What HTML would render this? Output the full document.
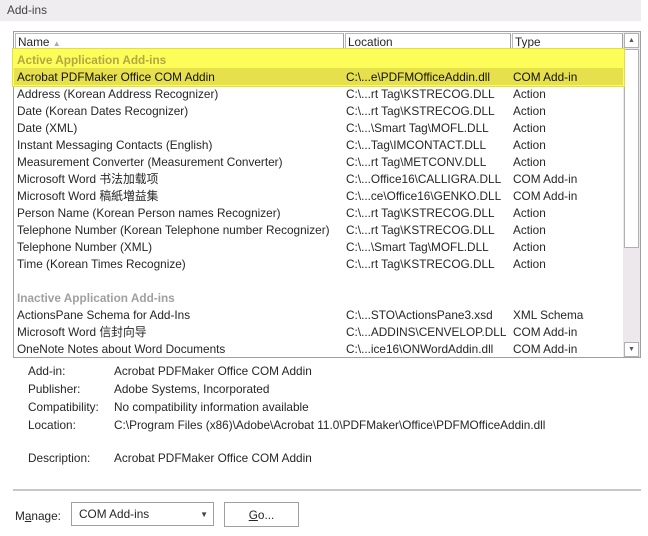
<!DOCTYPE html>
<html><head><style>
body{margin:0;width:648px;height:536px;background:#fff;font-family:"Liberation Sans","Noto Sans CJK SC",sans-serif;font-size:11.8px;color:#262626;position:relative;overflow:hidden}
.a{position:absolute;white-space:nowrap}
.band{left:0;top:0;width:641px;height:21px;background:#f0edf0}
.box{left:13px;top:31px;width:626px;height:325px;border:1px solid #a0a0a0;background:#fff}
.hd{top:33px;height:16px;border:1px solid #b8b8b8;border-right-color:#a0a0a0;background:#fff;line-height:16px;padding-left:2px;box-sizing:border-box}
.r{height:17px;line-height:19px}
.c1{left:17px}.c2{left:346px}.c3{left:513px}
</style></head><body>
<div class="a band"></div>
<div class="a" style="left:7px;top:2px;color:#444;line-height:16px">Add-ins</div>
<div class="a box"></div>
<div class="a hd" style="left:15px;width:329px">Name <span style="color:#aaa;font-size:8px">▲</span></div>
<div class="a hd" style="left:345px;width:166px">Location</div>
<div class="a hd" style="left:512px;width:111px">Type</div>
<div class="a" style="left:623px;top:32px;width:17px;height:325px;background:#ede8ec"></div>
<div class="a" style="left:624px;top:33px;height:15px;border:1px solid #b0b0b0;background:#fff;font-size:7px;text-align:center;line-height:13px;color:#555;box-sizing:border-box;width:15px">▲</div>
<div class="a" style="left:624px;top:49px;width:15px;height:199px;border:1px solid #b0b0b0;background:#fff;box-sizing:border-box"></div>
<div class="a" style="left:624px;top:342px;width:15px;height:15px;border:1px solid #b0b0b0;background:#fff;font-size:7px;text-align:center;line-height:13px;color:#555;box-sizing:border-box">▼</div>
<div class="a" style="left:12px;top:48px;width:613px;height:39px;background:#fdfd5a;border:1px solid #e0e040;box-sizing:border-box"></div>
<div class="a" style="left:14px;top:68px;width:609px;height:17px;background:#e6e04c"></div>
<div class="a r c1" style="top:51px;color:#b0a840;font-weight:bold">Active Application Add-ins</div>
<div class="a r c1" style="top:68px;color:#111">Acrobat PDFMaker Office COM Addin</div><div class="a r c2" style="top:68px;color:#111">C:\...e\PDFMOfficeAddin.dll</div><div class="a r c3" style="top:68px;color:#111">COM Add-in</div>
<div class="a r c1" style="top:85px">Address (Korean Address Recognizer)</div><div class="a r c2" style="top:85px">C:\...rt Tag\KSTRECOG.DLL</div><div class="a r c3" style="top:85px">Action</div>
<div class="a r c1" style="top:102px">Date (Korean Dates Recognizer)</div><div class="a r c2" style="top:102px">C:\...rt Tag\KSTRECOG.DLL</div><div class="a r c3" style="top:102px">Action</div>
<div class="a r c1" style="top:119px">Date (XML)</div><div class="a r c2" style="top:119px">C:\...\Smart Tag\MOFL.DLL</div><div class="a r c3" style="top:119px">Action</div>
<div class="a r c1" style="top:136px">Instant Messaging Contacts (English)</div><div class="a r c2" style="top:136px">C:\...Tag\IMCONTACT.DLL</div><div class="a r c3" style="top:136px">Action</div>
<div class="a r c1" style="top:153px">Measurement Converter (Measurement Converter)</div><div class="a r c2" style="top:153px">C:\...rt Tag\METCONV.DLL</div><div class="a r c3" style="top:153px">Action</div>
<div class="a r c1" style="top:170px">Microsoft Word 书法加载项</div><div class="a r c2" style="top:170px">C:\...Office16\CALLIGRA.DLL</div><div class="a r c3" style="top:170px">COM Add-in</div>
<div class="a r c1" style="top:187px">Microsoft Word 稿紙増益集</div><div class="a r c2" style="top:187px">C:\...ce\Office16\GENKO.DLL</div><div class="a r c3" style="top:187px">COM Add-in</div>
<div class="a r c1" style="top:204px">Person Name (Korean Person names Recognizer)</div><div class="a r c2" style="top:204px">C:\...rt Tag\KSTRECOG.DLL</div><div class="a r c3" style="top:204px">Action</div>
<div class="a r c1" style="top:221px">Telephone Number (Korean Telephone number Recognizer)</div><div class="a r c2" style="top:221px">C:\...rt Tag\KSTRECOG.DLL</div><div class="a r c3" style="top:221px">Action</div>
<div class="a r c1" style="top:238px">Telephone Number (XML)</div><div class="a r c2" style="top:238px">C:\...\Smart Tag\MOFL.DLL</div><div class="a r c3" style="top:238px">Action</div>
<div class="a r c1" style="top:255px">Time (Korean Times Recognize)</div><div class="a r c2" style="top:255px">C:\...rt Tag\KSTRECOG.DLL</div><div class="a r c3" style="top:255px">Action</div>
<div class="a r c1" style="top:289px;color:#a0a0a0;font-weight:bold">Inactive Application Add-ins</div>
<div class="a r c1" style="top:306px">ActionsPane Schema for Add-Ins</div><div class="a r c2" style="top:306px">C:\...STO\ActionsPane3.xsd</div><div class="a r c3" style="top:306px">XML Schema</div>
<div class="a r c1" style="top:323px">Microsoft Word 信封向导</div><div class="a r c2" style="top:323px">C:\...ADDINS\CENVELOP.DLL</div><div class="a r c3" style="top:323px">COM Add-in</div>
<div class="a r c1" style="top:340px">OneNote Notes about Word Documents</div><div class="a r c2" style="top:340px">C:\...ice16\ONWordAddin.dll</div><div class="a r c3" style="top:340px">COM Add-in</div>
<div class="a r" style="left:28px;top:362px">Add-in:</div><div class="a r" style="left:114px;top:362px">Acrobat PDFMaker Office COM Addin</div>
<div class="a r" style="left:28px;top:380px">Publisher:</div><div class="a r" style="left:114px;top:380px">Adobe Systems, Incorporated</div>
<div class="a r" style="left:28px;top:398px">Compatibility:</div><div class="a r" style="left:114px;top:398px">No compatibility information available</div>
<div class="a r" style="left:28px;top:416px">Location:</div><div class="a r" style="left:114px;top:416px">C:\Program Files (x86)\Adobe\Acrobat 11.0\PDFMaker\Office\PDFMOfficeAddin.dll</div>
<div class="a r" style="left:28px;top:449px">Description:</div><div class="a r" style="left:114px;top:449px">Acrobat PDFMaker Office COM Addin</div>
<div class="a" style="left:13px;top:489px;width:628px;height:2px;background:#c8c8c8"></div>
<div class="a r" style="left:15px;top:507px">M<u>a</u>nage:</div>
<div class="a" style="left:71px;top:502px;width:143px;height:24px;border:1px solid #a0a0a0;box-sizing:border-box;line-height:23px;padding-left:7px">COM Add-ins<span style="position:absolute;right:5px;top:0;font-size:8px;color:#444">▼</span></div>
<div class="a" style="left:224px;top:502px;width:75px;height:25px;border:1px solid #a0a0a0;box-sizing:border-box;line-height:24px;text-align:center"><u>G</u>o...</div>
</body></html>
